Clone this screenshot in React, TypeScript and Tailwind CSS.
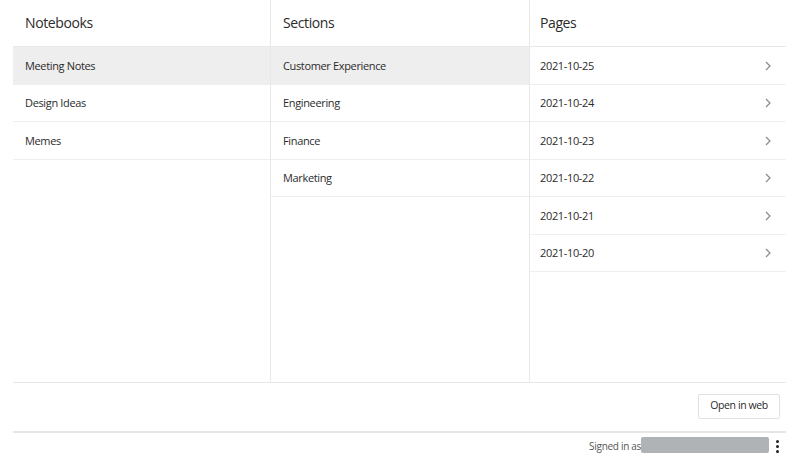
import React from "react";

const notebooks = ["Meeting Notes", "Design Ideas", "Memes"];
const sections = ["Customer Experience", "Engineering", "Finance", "Marketing"];
const pages = ["2021-10-25", "2021-10-24", "2021-10-23", "2021-10-22", "2021-10-21", "2021-10-20"];

function Chevron() {
  return (
    <svg width="8" height="10" viewBox="0 0 8 10" fill="none">
      <path d="M2 1l4 4-4 4" stroke="#8a8a8a" strokeWidth="1.2" />
    </svg>
  );
}

function Column({
  title,
  items,
  selected,
  chevron,
  last,
}: {
  title: string;
  items: string[];
  selected?: number;
  chevron?: boolean;
  last?: boolean;
}) {
  return (
    <div className={`flex flex-col ${last ? "" : "border-r border-[#e8e8e8]"}`}>
      <div
        className={`h-[47px] border-b border-[#e8e8e8] flex items-center pb-[1px] text-[14px] tracking-[-0.4px] text-[#2b2b2b] ${
          last ? "pl-[10px]" : "pl-3"
        }`}
      >
        {title}
      </div>
      {items.map((it, i) => (
        <div
          key={it}
          className={`h-[37.5px] border-b border-[#efefef] flex items-center justify-between pr-[14px] pt-[1px] text-[11px] tracking-[-0.35px] text-[#2b2b2b] ${
            last ? "pl-[10px]" : "pl-3"
          } ${selected === i ? "bg-[#eeeeee]" : ""}`}
        >
          <span>{it}</span>
          {chevron && <Chevron />}
        </div>
      ))}
    </div>
  );
}

export default function App() {
  return (
    <div
      className="w-[800px] h-[467px] bg-white pl-[13px] pr-[14px] flex flex-col"
      style={{ fontFamily: '"Open Sans", sans-serif' }}
    >
      <div className="grid grid-cols-[258px_259px_1fr] h-[383px] border-b border-[#e8e8e8]">
        <Column title="Notebooks" items={notebooks} selected={0} />
        <Column title="Sections" items={sections} selected={0} />
        <Column title="Pages" items={pages} chevron last />
      </div>
      <div className="h-[48px] flex items-center justify-end pr-[6px] pb-[2px]">
        <button className="h-[25px] w-[82px] border border-[#e1e1e1] rounded-[2px] text-[10.5px] tracking-[-0.4px] text-[#2b2b2b] bg-white">
          Open in web
        </button>
      </div>
      <div className="border-t-2 border-[#e6e6e6] flex items-start justify-end pt-[4px]">
        <span className="text-[10px] tracking-[-0.3px] text-[#555] leading-[16px] mt-[1px]">Signed in as</span>
        <div className="w-[128px] h-[16px] bg-[#b0b3b6] rounded-[2px]" />
        <div className="flex flex-col gap-[2px] ml-[7px] mr-[7px] mt-[3px]">
          <div className="w-[3px] h-[3px] rounded-full bg-[#222]" />
          <div className="w-[3px] h-[3px] rounded-full bg-[#222]" />
          <div className="w-[3px] h-[3px] rounded-full bg-[#222]" />
        </div>
      </div>
    </div>
  );
}
